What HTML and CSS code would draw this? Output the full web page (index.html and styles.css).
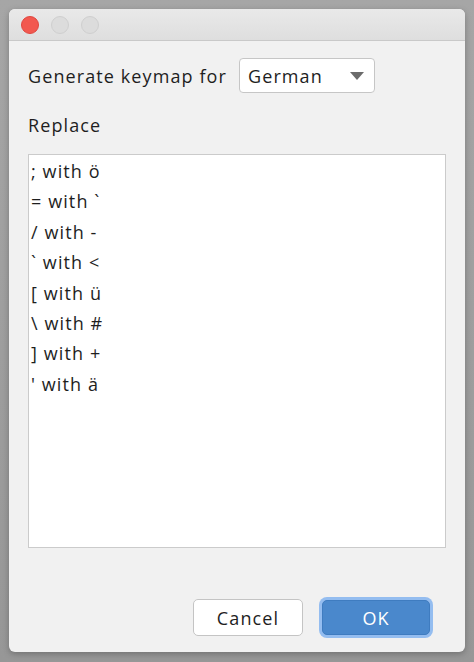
FILE: index.html
```html
<!DOCTYPE html>
<html lang="en">

<head>
    <meta charset="UTF-8">
    <title>Generate keymap</title>
    <link rel="stylesheet" href="styles.css">
</head>

<body>
    <div class="window">
        <div class="titlebar">
            <span class="light close"></span>
            <span class="light"></span>
            <span class="light"></span>
        </div>

        <div class="content">
            <div class="row">
                <label for="layout">Generate keymap for</label>
                <div class="select" id="layout">
                    <span>German</span>
                    <svg width="14" height="8" viewBox="0 0 14 8"><path d="M0 0h14L7 8z" fill="#6b6b6b"/></svg>
                </div>
            </div>

            <p class="section">Replace</p>

            <div class="textarea">
                <div>; with ö</div>
                <div>= with `</div>
                <div>/ with -</div>
                <div>` with &lt;</div>
                <div>[ with ü</div>
                <div>\ with #</div>
                <div>] with +</div>
                <div>' with ä</div>
            </div>

            <div class="actions">
                <button class="btn">Cancel</button>
                <button class="btn primary">OK</button>
            </div>
        </div>
    </div>
</body>

</html>
```

FILE: styles.css
```css
* {
    box-sizing: border-box;
}

body {
    margin: 0;
    width: 474px;
    height: 662px;
    background: linear-gradient(#a6a6a6, #979797);
    font-family: 'Open Sans', 'Liberation Sans', sans-serif;
    letter-spacing: 1.1px;
    color: #1e1e1e;
    overflow: hidden;
}

.window {
    margin: 9px 0 0 9px;
    width: 456px;
    height: 643px;
    background-color: #f1f1f1;
    border-radius: 6px;
    overflow: hidden;
    box-shadow: 0 2px 6px rgb(0 0 0 / 25%);
    display: flex;
    flex-direction: column;
}

.titlebar {
    height: 32px;
    flex: none;
    background: linear-gradient(#e9e9e9, #dedede);
    border-bottom: 1px solid #c9c9c9;
    display: flex;
    align-items: center;
    gap: 12px;
    padding-left: 12px;
}

.light {
    width: 18px;
    height: 18px;
    border-radius: 50%;
    border: 1px solid #cfcfcf;
    background-color: #dcdcdc;
}

.light.close {
    background-color: #f2584f;
    border-color: #e0463e;
}

.content {
    flex: 1;
    padding: 17px 19px 16px 19px;
    display: flex;
    flex-direction: column;
}

.row {
    display: flex;
    align-items: center;
    gap: 12px;
    font-size: 18px;
}

.select {
    width: 136px;
    height: 35px;
    background-color: #fff;
    border: 1px solid #c6c6c6;
    border-radius: 4px;
    display: flex;
    align-items: center;
    justify-content: space-between;
    padding: 0 10px 0 8px;
}

.section {
    margin: 20px 0 0;
    font-size: 18px;
}

.textarea {
    margin-top: 17px;
    height: 394px;
    width: 418px;
    background-color: #fff;
    border: 1px solid #cbcbcb;
    padding: 1px 2px;
    font-size: 18px;
    line-height: 30.4px;
}

.actions {
    margin-top: auto;
    display: flex;
    justify-content: flex-end;
    gap: 19px;
    padding-right: 14px;
}

.btn {
    font-family: inherit;
    letter-spacing: inherit;
    font-size: 18px;
    width: 110px;
    height: 37px;
    background-color: #fff;
    border: 1px solid #c4c4c4;
    border-radius: 5px;
    color: #1e1e1e;
}

.btn.primary {
    width: 108px;
    height: 35px;
    margin-top: 1px;
    margin-right: 2px;
    background-color: #4a88cc;
    border-color: #3f7cc0;
    color: #fff;
    box-shadow: 0 0 0 3px #94bdf0;
}
```
